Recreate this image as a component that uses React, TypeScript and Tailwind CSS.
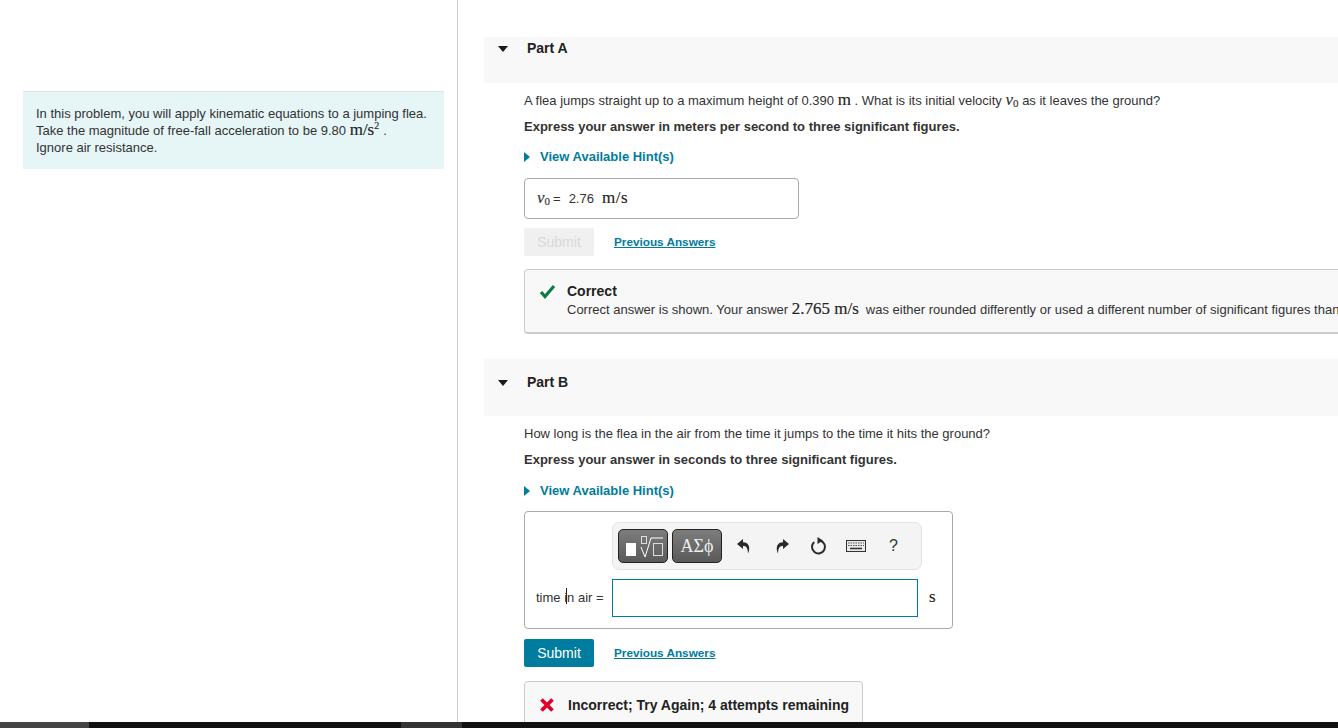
const sans = "font-['Liberation_Sans',Arial,sans-serif]";

// math runs sit in the text line without making it taller
function Unit({ children, className = "" }: { children: React.ReactNode; className?: string }) {
  return (
    <span className={`font-['Liberation_Serif',serif] text-[17px] leading-[0] text-[#222] [-webkit-text-stroke:0.15px_#222] ${className}`}>
      {children}
    </span>
  );
}

function V0() {
  return (
    <span className="font-['Liberation_Serif',serif] italic text-[17px] leading-[0] [-webkit-text-stroke:0.15px_#333]">
      v<sub className="relative top-[2px] align-baseline text-[11px] not-italic leading-[0]">0</sub>
    </span>
  );
}

function PartHeader({ title, h, top }: { title: string; h: string; top: string }) {
  return (
    <div className={`flex ${h} items-start bg-[#f8f8f8] pl-[14px] ${top}`}>
      <div className="mt-[5px] h-0 w-0 border-x-[5.5px] border-t-[6px] border-x-transparent border-t-[#1a1a1a]" />
      <span className="ml-[19px] text-[14px] font-bold leading-[15px] text-[#222]">{title}</span>
    </div>
  );
}

function Hint() {
  return (
    <div className="flex items-center text-[13px] font-bold leading-[16px] text-[#007c9e]">
      <div className="h-0 w-0 border-y-[5px] border-l-[6px] border-y-transparent border-l-[#007c9e]" />
      <span className="ml-[10px]">View Available Hint(s)</span>
    </div>
  );
}

function SubmitRow({ active }: { active?: boolean }) {
  return (
    <div className="flex items-center">
      <button
        className={`h-[28px] w-[70px] rounded-[2px] text-[14px] ${
          active ? "bg-[#007c9e] text-white" : "bg-[#f0f0f0] text-[#d9d9d9]"
        }`}
      >
        Submit
      </button>
      <a className="ml-[20px] text-[11.75px] font-bold text-[#007c9e] underline">Previous Answers</a>
    </div>
  );
}

function Toolbar() {
  return (
    <div className="flex h-[48px] w-[310px] items-center rounded-[7px] border border-[#e3e3e3] bg-[#f4f4f4] pl-[5px]">
      <div className="flex h-[34px] w-[50px] items-center justify-center rounded-[5px] border border-[#222] bg-gradient-to-b from-[#7d7d7d] to-[#5a5a5a]">
        <svg width="44" height="30" viewBox="0 0 44 30" fill="none">
          <rect x="5" y="12" width="10" height="13" fill="#fff" />
          <rect x="20.5" y="5.5" width="5" height="7" stroke="#ddd" />
          <path d="M20 16l4 10 6-19h12" stroke="#fff" />
          <rect x="32.5" y="12.5" width="9" height="12" stroke="#ddd" />
        </svg>
      </div>
      <div className="ml-[4px] flex h-[34px] w-[50px] items-center justify-center rounded-[5px] border border-[#222] bg-gradient-to-b from-[#7d7d7d] to-[#5a5a5a] font-['Liberation_Serif',serif] text-[18px] text-[#eee]">
        ΑΣϕ
      </div>
      <svg className="ml-[14px]" width="16" height="17" viewBox="0 0 16 17" fill="#2b2b2b">
        <path d="M7 1L1 6l6 5V8c3 0 4.8 1.5 5 7.5C14.5 10 13.500 4.500 7 4.200z" />
      </svg>
      <svg className="ml-[22px]" width="16" height="17" viewBox="0 0 16 17" fill="#2b2b2b">
        <path d="M9 1l6 5-6 5V8c-3 0-4.800 1.500-5 7.500C1.500 10 2.500 4.500 9 4.200z" />
      </svg>
      <svg className="ml-[20px]" width="18" height="18" viewBox="0 0 18 18" fill="none">
        <path d="M10.500 3.700A6.500 6.500 0 1 1 4.200 5" stroke="#2b2b2b" strokeWidth="2" />
        <path d="M7.500 0l5.500 3.500L7.500 7z" fill="#2b2b2b" />
      </svg>
      <svg className="ml-[18px]" width="20" height="12" viewBox="0 0 20 12" fill="none">
        <rect x="0.500" y="0.500" width="19" height="11" fill="#e8e8e8" stroke="#333" />
        <path d="M2 3h16M2 5.500h16" stroke="#555" strokeDasharray="1.500 1" />
        <path d="M4 8.500h12" stroke="#333" strokeWidth="1.500" />
      </svg>
      <span className="ml-[23px] text-[16px] text-[#333]">?</span>
    </div>
  );
}

export default function App() {
  return (
    <div className={`flex h-[728px] w-[1338px] flex-col overflow-hidden bg-white ${sans} text-[#333]`}>
      <div className="flex min-h-0 flex-1">
        <aside className="w-[458px] shrink-0 border-r border-[#c8d0d8] pl-[23px] pr-[13px] pt-[91px]">
          <div className="h-[78px] border-t border-[#dde3e6] bg-[#e6f5f6] px-[13px] pt-[13px] text-[13px] leading-[17px]">
            <p>In this problem, you will apply kinematic equations to a jumping flea.</p>
            <p>
              Take the magnitude of free-fall acceleration to be 9.80{" "}
              <Unit>
                m/s<sup className="relative -top-[6px] align-baseline text-[10px] leading-[0]">2</sup>
              </Unit>
              <span className="ml-[4px]">.</span>
            </p>
            <p>Ignore air resistance.</p>
          </div>
        </aside>

        <main className="min-w-0 flex-1 overflow-hidden pl-[26px] pt-[37px]">
          <PartHeader title="Part A" h="h-[46px]" top="pt-[4px]" />
          <div className="pl-[40px]">
            <p className="mt-[10px] text-[13px] leading-[16px]">
              A flea jumps straight up to a maximum height of 0.390 <Unit>m</Unit> . What
              is its initial velocity <V0 /> as it leaves the ground?
            </p>
            <p className="mt-[10px] text-[13px] font-bold leading-[16px]">
              Express your answer in meters per second to three significant figures.
            </p>
            <div className="mt-[14px]">
              <Hint />
            </div>
            <div className="mt-[13px] flex h-[41px] w-[275px] items-center rounded-[4px] border border-[#aaa] pl-[12px] text-[13px]">
              <span className="whitespace-nowrap">
                <V0 />
                <span className="ml-[3px]">=</span>
                <span className="ml-[8px]">2.76</span>
                <Unit className="ml-[8px] tracking-[0.5px]">m/s</Unit>
              </span>
            </div>
            <div className="mt-[9px]">
              <SubmitRow />
            </div>
            <div className="mt-[13px] h-[65px] w-[1000px] rounded-[4px] border border-b-2 border-[#ccc] bg-[#f8f8f8] pl-[14px] pt-[13px]">
              <div className="flex">
                <svg className="mt-[1px] shrink-0" width="17" height="15" viewBox="0 0 17 15" fill="none">
                  <path d="M2 8l4 4.500L15 2" stroke="#0a7d45" strokeWidth="3.200" />
                </svg>
                <div className="ml-[11px] whitespace-nowrap">
                  <div className="text-[14px] font-bold leading-[16px] text-[#222]">Correct</div>
                  <div className="mt-[1px] text-[13px] leading-[20px]">
                    Correct answer is shown. Your answer <Unit>2.765 m/s</Unit>
                    <span className="ml-[7px]">
                      was either rounded differently or used a different number of significant figures than required for this part.
                    </span>
                  </div>
                </div>
              </div>
            </div>
          </div>

          <div className="mt-[25px]">
            <PartHeader title="Part B" h="h-[57px]" top="pt-[16px]" />
          </div>
          <div className="pl-[40px]">
            <p className="mt-[10px] text-[13px] leading-[16px]">
              How long is the flea in the air from the time it jumps to the time it hits the ground?
            </p>
            <p className="mt-[10px] text-[13px] font-bold leading-[16px]">
              Express your answer in seconds to three significant figures.
            </p>
            <div className="mt-[15px]">
              <Hint />
            </div>
            <div className="mt-[12px] h-[118px] w-[429px] rounded-[4px] border border-[#aaa] pl-[11px] pt-[10px]">
              <div className="pl-[76px]">
                <Toolbar />
              </div>
              <div className="mt-[9px] flex items-center">
                <span className="relative w-[76px] whitespace-nowrap text-[13px]">
                  time in air =
                  <span className="absolute left-[30px] top-0 h-[16px] w-px bg-[#222]" />
                </span>
                <div className="h-[38px] w-[306px] border border-[#007c9e]" />
                <span className="ml-[11px] text-[13px]">
                  <Unit>s</Unit>
                </span>
              </div>
            </div>
            <div className="mt-[10px]">
              <SubmitRow active />
            </div>
            <div className="mt-[14px] flex h-[60px] w-[339px] items-start rounded-[4px] border border-[#ccc] bg-[#f8f8f8] pl-[14px] pt-[15px]">
              <svg className="shrink-0" width="16" height="16" viewBox="0 0 16 16" fill="none">
                <path d="M2.500 2.500l11 11M13.500 2.500l-11 11" stroke="#e0002b" strokeWidth="3.800" />
              </svg>
              <span className="ml-[13px] whitespace-nowrap text-[14px] font-bold leading-[16px] text-[#222]">
                Incorrect; Try Again; 4 attempts remaining
              </span>
            </div>
          </div>
        </main>
      </div>

      <div className="flex h-[6px] shrink-0 bg-[#111]">
        <div className="w-[89px] bg-[#444]" />
        <div className="w-[312px]" />
        <div className="w-[61px] bg-[#333]" />
      </div>
    </div>
  );
}
